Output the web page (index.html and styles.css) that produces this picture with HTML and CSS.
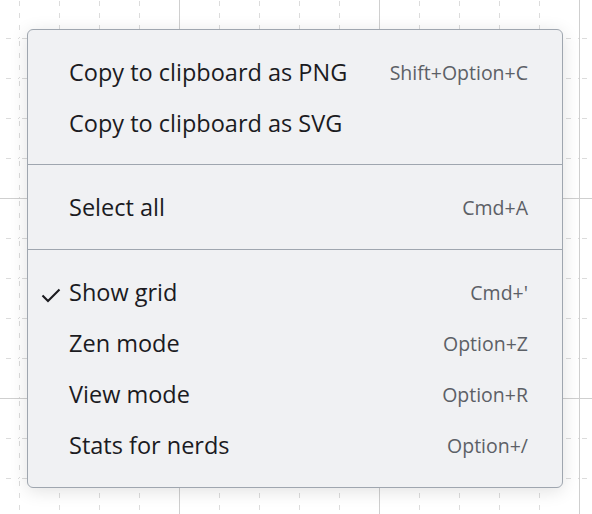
FILE: index.html
```html
<!DOCTYPE html>
<html lang="en">
<head>
<meta charset="utf-8">
<title>Context menu</title>
<link rel="stylesheet" href="styles.css">
</head>
<body>
<svg class="grid" width="592" height="514" xmlns="http://www.w3.org/2000/svg">
  <defs>
    <pattern id="minor" x="19" y="38" width="40" height="40" patternUnits="userSpaceOnUse">
      <line x1="0.5" y1="0" x2="0.5" y2="40" stroke="#dcdcdc" stroke-width="1" stroke-dasharray="5 7" stroke-dashoffset="-3"/>
      <line x1="0" y1="0.5" x2="40" y2="0.5" stroke="#dcdcdc" stroke-width="1" stroke-dasharray="5 7" stroke-dashoffset="-3"/>
    </pattern>
    <pattern id="major" x="179" y="198" width="200" height="200" patternUnits="userSpaceOnUse">
      <line x1="0.5" y1="0" x2="0.5" y2="200" stroke="#cfcfcf" stroke-width="1"/>
      <line x1="0" y1="0.5" x2="200" y2="0.5" stroke="#cfcfcf" stroke-width="1"/>
    </pattern>
  </defs>
  <rect width="592" height="514" fill="#fff"/>
  <rect width="592" height="514" fill="url(#minor)"/>
  <rect width="592" height="514" fill="url(#major)"/>
</svg>

<ul class="menu">
  <li class="section">
    <div class="item"><span class="label">Copy to clipboard as PNG</span><span class="shortcut">Shift+Option+C</span></div>
    <div class="item"><span class="label">Copy to clipboard as SVG</span></div>
  </li>
  <li class="section">
    <div class="item"><span class="label">Select all</span><span class="shortcut">Cmd+A</span></div>
  </li>
  <li class="section">
    <div class="item checked"><svg class="check" width="20" height="15" viewBox="0 0 20 15" xmlns="http://www.w3.org/2000/svg"><polyline points="1.5,7.5 7,13 18.5,1.5" fill="none" stroke="#1b1b1f" stroke-width="2.1"/></svg><span class="label">Show grid</span><span class="shortcut">Cmd+'</span></div>
    <div class="item"><span class="label">Zen mode</span><span class="shortcut">Option+Z</span></div>
    <div class="item"><span class="label">View mode</span><span class="shortcut">Option+R</span></div>
    <div class="item"><span class="label">Stats for nerds</span><span class="shortcut">Option+/</span></div>
  </li>
</ul>
</body>
</html>
```

FILE: styles.css
```css
html, body {
  margin: 0;
  padding: 0;
  width: 592px;
  height: 514px;
  overflow: hidden;
  background: #fff;
}

body {
  position: relative;
  font-family: "Open Sans", "Noto Sans", sans-serif;
}

.grid {
  position: absolute;
  left: 0;
  top: 0;
  display: block;
}

.menu {
  position: absolute;
  left: 27px;
  top: 29px;
  width: 536px;
  box-sizing: border-box;
  margin: 0;
  padding: 0;
  list-style: none;
  background: #f0f1f3;
  border: 1px solid #9fa6af;
  border-radius: 6px;
  box-shadow: 0 3px 18px rgba(0, 0, 0, 0.12);
}

.section {
  padding: 17px 0 16px;
}

.section:first-child {
  padding-bottom: 15px;
}

.section + .section {
  border-top: 1px solid #9fa6af;
}

.item {
  position: relative;
  height: 51px;
  display: flex;
  align-items: center;
  justify-content: space-between;
  padding: 0 34px 0 41px;
}

.label {
  font-size: 23.5px;
  color: #1b1b1f;
  line-height: 1;
}

.shortcut {
  font-size: 19.5px;
  color: #5c6066;
  line-height: 1;
}

.check {
  position: absolute;
  left: 13px;
  top: 21px;
}
```
